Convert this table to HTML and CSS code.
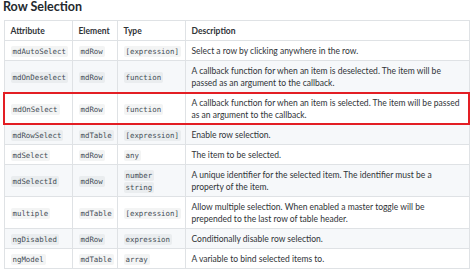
FILE: index.html
```html
<!DOCTYPE html>
<html lang="en">
<head>
    <meta charset="UTF-8">
    <title>Row Selection</title>
    <link rel="stylesheet" href="styles.css">
</head>
<body>
    <div class="doc">
        <h3>Row Selection</h3>
        <table class="api">
            <thead>
                <tr>
                    <th class="col-attr">Attribute</th>
                    <th class="col-el">Element</th>
                    <th class="col-type">Type</th>
                    <th>Description</th>
                </tr>
            </thead>
            <tbody>
                <tr>
                    <td><code>mdAutoSelect</code></td>
                    <td><code>mdRow</code></td>
                    <td><code>[expression]</code></td>
                    <td>Select a row by clicking anywhere in the row.</td>
                </tr>
                <tr>
                    <td><code>mdOnDeselect</code></td>
                    <td><code>mdRow</code></td>
                    <td><code>function</code></td>
                    <td>A callback function for when an item is deselected. The item will be passed as an argument to the callback.</td>
                </tr>
                <tr class="marked">
                    <td><code>mdOnSelect</code></td>
                    <td><code>mdRow</code></td>
                    <td><code>function</code></td>
                    <td>A callback function for when an item is selected. The item will be passed as an argument to the callback.</td>
                </tr>
                <tr>
                    <td><code>mdRowSelect</code></td>
                    <td><code>mdTable</code></td>
                    <td><code>[expression]</code></td>
                    <td>Enable row selection.</td>
                </tr>
                <tr>
                    <td><code>mdSelect</code></td>
                    <td><code>mdRow</code></td>
                    <td><code>any</code></td>
                    <td>The item to be selected.</td>
                </tr>
                <tr>
                    <td><code>mdSelectId</code></td>
                    <td><code>mdRow</code></td>
                    <td><code>number</code><br><code>string</code></td>
                    <td>A unique identifier for the selected item. The identifier must be a property of the item.</td>
                </tr>
                <tr>
                    <td><code>multiple</code></td>
                    <td><code>mdTable</code></td>
                    <td><code>[expression]</code></td>
                    <td>Allow multiple selection. When enabled a master toggle will be prepended to the last row of table header.</td>
                </tr>
                <tr>
                    <td><code>ngDisabled</code></td>
                    <td><code>mdRow</code></td>
                    <td><code>expression</code></td>
                    <td>Conditionally disable row selection.</td>
                </tr>
                <tr>
                    <td><code>ngModel</code></td>
                    <td><code>mdTable</code></td>
                    <td><code>array</code></td>
                    <td>A variable to bind selected items to.</td>
                </tr>
            </tbody>
        </table>
    </div>
</body>
</html>
```

FILE: styles.css
```css
* {
    margin: 0;
    padding: 0;
    box-sizing: border-box;
}

body {
    background-color: #fff;
    color: #2f3337;
    font-family: 'Lato', 'Open Sans', Arial, sans-serif;
    font-size: 8.5px;
    line-height: 12px;
}

.doc {
    padding: 0 4px 0 3px;
}

h3 {
    font-size: 12.5px;
    font-weight: 700;
    line-height: 14px;
    margin-bottom: 6px;
    color: #24292e;
}

.api {
    width: 467px;
    border-collapse: collapse;
    table-layout: fixed;
}

.api th,
.api td {
    border: 1px solid #dfe2e5;
    padding: 4px 6px 3px;
    height: 20px;
    text-align: left;
    vertical-align: middle;
    line-height: 12px;
}

.api th {
    font-weight: 700;
}

.col-attr {
    width: 68px;
}

.col-el {
    width: 45px;
}

.col-type {
    width: 68px;
}

.api tbody tr:nth-child(2n) {
    background-color: #f6f8fa;
}

code {
    font-family: 'DejaVu Sans Mono', 'Liberation Mono', monospace;
    font-size: 7.4px;
    line-height: 1;
    background-color: rgba(27, 31, 35, 0.05);
    border-radius: 2px;
    padding: 1px 2px;
    color: #444d56;
}

.api tr.marked td {
    padding: 3px 6px 2px;
    border-top: 2px solid #e31e24;
    border-bottom: 2px solid #e31e24;
}

.api tr.marked td:first-child {
    border-left: 2px solid #e31e24;
}

.api tr.marked td:last-child {
    border-right: 2px solid #e31e24;
}
```
